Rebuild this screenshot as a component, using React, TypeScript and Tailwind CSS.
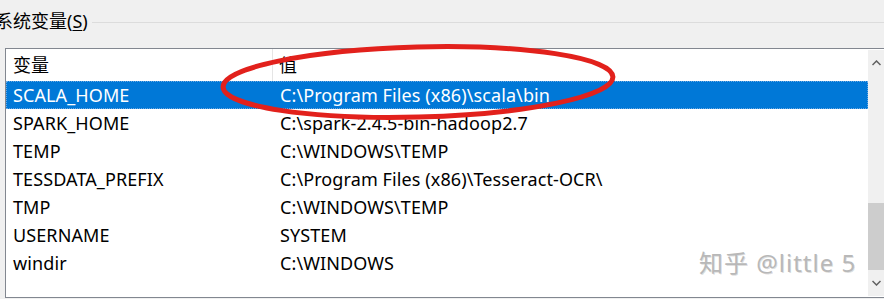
import React from "react";

const rows = [
  { name: "SCALA_HOME", value: "C:\\Program Files (x86)\\scala\\bin", selected: true },
  { name: "SPARK_HOME", value: "C:\\spark-2.4.5-bin-hadoop2.7" },
  { name: "TEMP", value: "C:\\WINDOWS\\TEMP" },
  { name: "TESSDATA_PREFIX", value: "C:\\Program Files (x86)\\Tesseract-OCR\\" },
  { name: "TMP", value: "C:\\WINDOWS\\TEMP" },
  { name: "USERNAME", value: "SYSTEM" },
  { name: "windir", value: "C:\\WINDOWS" },
];

const font = { fontFamily: '"Noto Sans", "Noto Sans CJK SC", sans-serif' };

export default function App() {
  return (
    <div className="relative w-[884px] h-[299px] overflow-hidden bg-[#f0f0f0] text-[#000]" style={font}>
      {/* group title */}
      <div className="flex items-center h-[44px] -ml-[5px]">
        <span className="text-[18px] leading-none pb-[2px]">
          系统变量(<span className="underline underline-offset-2">S</span>)
        </span>
        <div className="flex-1 h-px bg-[#dcdcdc] ml-1" />
      </div>

      {/* list box */}
      <div className="ml-[5px] mt-[4px] w-[900px] h-[250px] border border-[#828790] bg-white flex">
        <div className="w-[862px] flex flex-col">
          <div className="flex h-[32px] items-center text-[18px]">
            <div className="w-[267px] pl-[7px] h-full flex items-center border-r border-[#e5e5e5]">变量</div>
            <div className="pl-[6px]">值</div>
          </div>
          {rows.map((r) => (
            <div
              key={r.name}
              className={`flex h-[28px] items-center text-[18px] tracking-[0.1px] ${
                r.selected ? "bg-[#0078d7] text-white outline outline-1 outline-dotted outline-[#6aa9e3] -outline-offset-1" : ""
              }`}
            >
              <div className="w-[268px] pl-[7px]">{r.name}</div>
              <div className="pl-[6px]">{r.value}</div>
            </div>
          ))}
        </div>
        {/* scrollbar */}
        <div className="w-[17px] bg-[#f0f0f0] flex flex-col my-[1px]">
          <div className="h-[26px] flex items-center justify-center">
            <svg width="9" height="6" viewBox="0 0 9 6"><path d="M0.5 5 L4.5 1 L8.5 5" stroke="#606060" strokeWidth="1.5" fill="none" /></svg>
          </div>
          <div className="flex-1 flex flex-col justify-end">
            <div className="h-[67px] bg-[#cdcdcd]" />
          </div>
          <div className="h-[26px] flex items-center justify-center">
            <svg width="9" height="6" viewBox="0 0 9 6"><path d="M0.5 1 L4.5 5 L8.5 1" stroke="#606060" strokeWidth="1.5" fill="none" /></svg>
          </div>
        </div>
      </div>

      {/* watermark */}
      <div
        className="absolute left-[699px] top-[245px] text-[24px] text-[#b8b8b8] tracking-[1px]"
        style={{ textShadow: "1px 1px 0 rgba(0,0,0,0.12)" }}
      >
        知乎 @little 5
      </div>

      {/* red annotation ellipse */}
      <svg className="absolute left-0 top-0 pointer-events-none" width="884" height="299">
        <ellipse
          cx="418"
          cy="82"
          rx="195"
          ry="35"
          transform="rotate(-1.5 418 82)"
          fill="none"
          stroke="#e2211c"
          strokeWidth="5"
        />
      </svg>
    </div>
  );
}
